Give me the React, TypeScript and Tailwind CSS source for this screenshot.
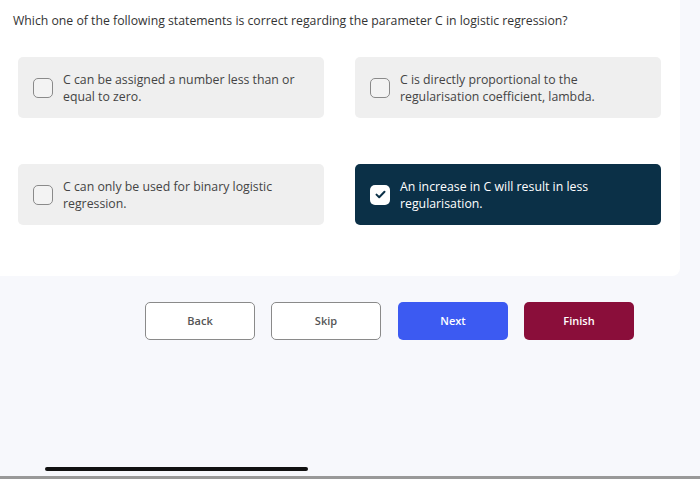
import React from "react";

const options = [
  { text: "C can be assigned a number less than or equal to zero.", selected: false },
  { text: "C is directly proportional to the regularisation coefficient, lambda.", selected: false },
  { text: "C can only be used for binary logistic regression.", selected: false },
  { text: "An increase in C will result in less regularisation.", selected: true },
];

function Option({ text, selected }: { text: string; selected: boolean }) {
  return (
    <div
      className={
        "h-[61px] rounded-[5px] flex items-center pl-[15px] pr-[20px] " +
        (selected ? "bg-[#0b3047] text-white" : "bg-[#efefef] text-[#444]")
      }
    >
      <div
        className={
          "w-[20px] h-[20px] shrink-0 rounded-[5px] flex items-center justify-center " +
          (selected ? "bg-white" : "border-[1.5px] border-[#8a8a8a] bg-[#f3f3f3]")
        }
      >
        {selected && (
          <svg width="11" height="9" viewBox="0 0 11 9">
            <path d="M1.5 4.6 L4.2 7.2 L9.5 1.8" fill="none" stroke="#0b3047" strokeWidth="2" strokeLinecap="round" strokeLinejoin="round" />
          </svg>
        )}
      </div>
      <div className="ml-[10px] text-[12.3px] leading-[17px] max-w-[240px]">{text}</div>
    </div>
  );
}

export default function App() {
  return (
    <div
      className="w-[700px] h-[479px] bg-[#f7f8fc] flex flex-col relative overflow-hidden"
      style={{ fontFamily: '"Open Sans", "Noto Sans", sans-serif' }}
    >
      <div className="w-[680px] h-[276px] bg-white rounded-br-[8px] shrink-0">
        <div className="pt-[12px] pl-[13px] text-[12.25px] leading-[18px] text-[#333]">
          Which one of the following statements is correct regarding the parameter C in logistic regression?
        </div>
        <div className="grid grid-cols-[306px_306px] gap-x-[31px] gap-y-[46px] pl-[18px] pt-[27px]">
          {options.map((o, i) => (
            <Option key={i} text={o.text} selected={o.selected} />
          ))}
        </div>
      </div>
      <div className="flex gap-[16px] pl-[145px] pt-[26px]">
        <button className="w-[110px] h-[38px] rounded-[5px] border-[1.5px] border-[#8a8a8a] bg-white text-[11px] font-semibold text-[#555]">
          Back
        </button>
        <button className="w-[110px] h-[38px] rounded-[5px] border-[1.5px] border-[#8a8a8a] bg-white text-[11px] font-semibold text-[#555]">
          Skip
        </button>
        <button className="w-[110px] h-[38px] rounded-[5px] bg-[#3c5af2] text-[11px] font-semibold text-white ml-[1px]">
          Next
        </button>
        <button className="w-[110px] h-[38px] rounded-[5px] bg-[#8a0e3a] text-[11px] font-semibold text-white">
          Finish
        </button>
      </div>
      <div className="flex-1" />
      <div className="pl-[45px] pb-[5px]">
        <div className="w-[263px] h-[4px] rounded-full bg-[#111]" />
      </div>
      <div className="h-[3px] bg-[#999]" />
    </div>
  );
}
